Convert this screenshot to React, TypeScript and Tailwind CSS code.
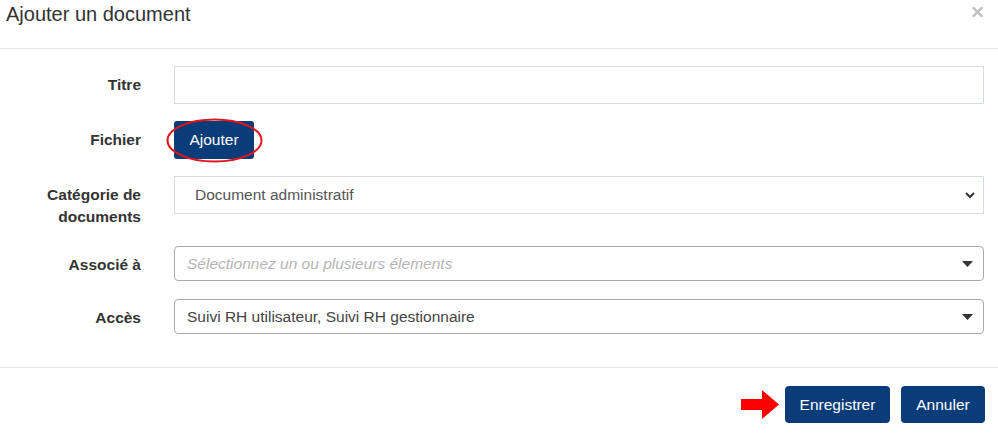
// Imports
import React from "react";

// Label cell of a form row
function FieldLabel({ children }: { children: React.ReactNode }) {
    return (
        <label className="w-[141px] shrink-0 pt-2 text-right text-[15.5px] font-bold leading-[22px] text-[#333]">
            {children}
        </label>
    );
}

// Small solid triangle used by the select2-like fields
function Caret() {
    return (
        <svg width="11" height="6" viewBox="0 0 11 6" className="shrink-0">
            <path d="M0 0 L11 0 L5.5 6 Z" fill="#333" />
        </svg>
    );
}

function App() {
    return (
        <section className="w-[998px] h-[434px] bg-white overflow-hidden font-['Liberation_Sans',Arial,sans-serif]">
            {/* Header */}
            <div className="h-[49px] border-b border-[#e8e8e8] flex justify-between items-start">
                <h4 className="pl-[6px] pt-[3px] text-[20px] leading-[22px] text-[#333]">Ajouter un document</h4>
                <button className="mt-[7px] mr-[15px] p-0">
                    <svg width="11" height="10" viewBox="0 0 11 10">
                        <path d="M1.5 1 L9.5 9 M9.5 1 L1.5 9" stroke="#c2c2c2" strokeWidth="2.6" strokeLinecap="square" />
                    </svg>
                </button>
            </div>

            {/* Body */}
            <div className="pt-[17px] pb-[33px] pr-[14px] flex flex-col gap-[17px]">
                {/* Titre */}
                <div className="flex items-start gap-[33px]">
                    <FieldLabel>Titre</FieldLabel>
                    <input type="text" className="flex-1 h-[38px] border border-[#d6dbe4] px-3 text-[15.5px] outline-none" />
                </div>

                {/* Fichier */}
                <div className="flex items-start gap-[33px]">
                    <FieldLabel>Fichier</FieldLabel>
                    <div className="relative">
                        <button className="w-[80px] h-[38px] rounded-[3px] bg-[#093c78] text-white text-[15.5px]">Ajouter</button>
                        <svg width="97" height="45" viewBox="0 0 97 45" className="absolute left-[-8px] top-[-3px] pointer-events-none">
                            <ellipse cx="48.5" cy="22.5" rx="47" ry="21" fill="none" stroke="#e0161b" strokeWidth="2" />
                        </svg>
                    </div>
                </div>

                {/* Catégorie */}
                <div className="flex items-start gap-[33px]">
                    <FieldLabel>Catégorie de<br />documents</FieldLabel>
                    <div className="flex-1 h-[38px] border border-[#d6dbe4] pl-5 pr-[7px] flex items-center justify-between text-[15.5px] text-[#555]">
                        <span>Document administratif</span>
                        <svg width="12" height="8" viewBox="0 0 12 8">
                            <path d="M2 2 L6 6 L10 2" fill="none" stroke="#333" strokeWidth="2" />
                        </svg>
                    </div>
                </div>

                {/* Associé à */}
                <div className="flex items-start gap-[33px] mt-px">
                    <FieldLabel>Associé à</FieldLabel>
                    <div className="flex-1 h-[35px] border border-[#aaa] rounded-[4px] pl-3 pr-[10px] flex items-center justify-between text-[15.5px]">
                        <span className="italic text-[#b5b5b5]">Sélectionnez un ou plusieurs élements</span>
                        <Caret />
                    </div>
                </div>

                {/* Accès */}
                <div className="flex items-start gap-[33px] mt-px">
                    <FieldLabel>Accès</FieldLabel>
                    <div className="flex-1 h-[35px] border border-[#aaa] rounded-[4px] pl-3 pr-[10px] flex items-center justify-between text-[15.5px] text-[#444]">
                        <span>Suivi RH utilisateur, Suivi RH gestionnaire</span>
                        <Caret />
                    </div>
                </div>
            </div>

            {/* Footer */}
            <div className="border-t border-[#e8e8e8] pt-[18px] pr-[13px] flex justify-end items-center">
                <svg width="38" height="29" viewBox="0 0 38 29" className="mr-[6px]">
                    <path d="M0 9 L21 9 L21 0 L38 14.5 L21 29 L21 20 L0 20 Z" fill="#ff0000" />
                </svg>
                <button className="w-[105px] h-[37px] rounded-[4px] bg-[#093c78] text-white text-[15.5px]">Enregistrer</button>
                <button className="ml-[11px] w-[84px] h-[37px] rounded-[4px] bg-[#093c78] text-white text-[15.5px]">Annuler</button>
            </div>
        </section>
    );
}

export default App;
